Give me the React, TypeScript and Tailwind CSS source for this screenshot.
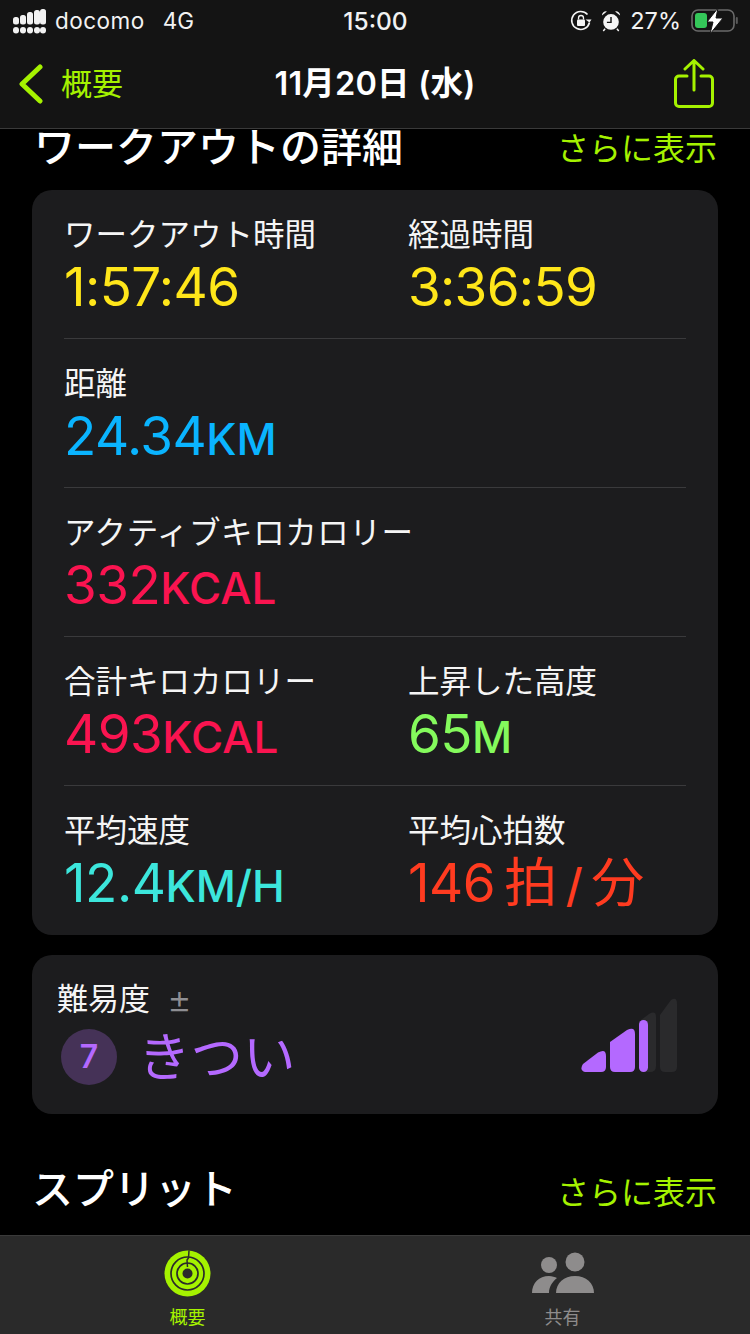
const font = { fontFamily: '"Inter","Noto Sans CJK JP",sans-serif' };

function Signal() {
  return (
    <svg width="33" height="25" viewBox="0 0 33 25" fill="#f2f2f2">
      {[0, 7, 14, 21, 27].map((x, i) => (
        <g key={x}>
          <rect x={x} y={18} width="6" height="6.5" rx="3" />
          <rect x={x} y={[8, 6, 3, 1, 0][i]} width="6" height={[7.5, 9.5, 12.5, 14.5, 15.5][i]} rx="2.5" />
        </g>
      ))}
    </svg>
  );
}

function Battery() {
  return (
    <svg width="47" height="26" viewBox="0 0 47 26">
      <rect x="1" y="2" width="42" height="21" rx="6" fill="none" stroke="#6a6a6a" strokeWidth="1.6" />
      <rect x="4" y="5" width="12" height="15" rx="3" fill="#34c759" />
      <rect x="44.8" y="9" width="2" height="7" rx="1" fill="#5a5a5a" />
      <path d="M27 0 L16 14 H22 L19 26 L32 10 H25 Z" fill="#fff" stroke="#141414" strokeWidth="1" />
    </svg>
  );
}

function LockIcon() {
  return (
    <svg width="22" height="22" viewBox="0 0 22 22" fill="none" className="mr-[9px]">
      <path d="M19.5 12.5 A9 9 0 1 1 17.5 4.5" stroke="#f5f5f5" strokeWidth="1.6" />
      <path d="M15.5 9.5 H21.5 L19.5 12.5 Z" fill="#f5f5f5" />
      <rect x="7" y="9.5" width="8" height="6.5" rx="1" fill="#f5f5f5" />
      <path d="M8.5 9.5 V8 A2.5 2.5 0 0 1 13.5 8 V9.5" stroke="#f5f5f5" strokeWidth="1.3" />
    </svg>
  );
}

function AlarmIcon() {
  return (
    <svg width="20" height="24" viewBox="0 0 22 24" fill="none" className="mr-[9px]">
      <circle cx="11" cy="13" r="8.6" fill="#f5f5f5" />
      <path d="M11 7.5 V13.5 H6.5" stroke="#141414" strokeWidth="1.6" />
      <path d="M1 6 A4.5 4.5 0 0 1 6.5 1.5 Z M21 6 A4.5 4.5 0 0 0 15.5 1.5 Z" fill="#f5f5f5" />
      <path d="M4.5 20.5 L2.5 23 M17.5 20.5 L19.5 23" stroke="#f5f5f5" strokeWidth="1.6" />
    </svg>
  );
}

function Metric({ label, value, unit, color, tracking, labelClass }: { label: string; value: React.ReactNode; unit?: string; color: string; tracking?: string; labelClass?: string }) {
  return (
    <div className="flex flex-col">
      <div className={`text-[31.5px] leading-[38px] text-[#f5f5f5] whitespace-nowrap ${labelClass ?? ""}`}>{label}</div>
      <div className={`mt-[2px] text-[53px] leading-[62px] whitespace-nowrap ${tracking ?? "tracking-[-0.5px]"} ${color}`}>
        {value}
        {unit && <span className="text-[44px] font-medium tracking-[0px]">{unit}</span>}
      </div>
    </div>
  );
}

function Row({ children, last }: { children: React.ReactNode; last?: boolean }) {
  return (
    <div className={`grid grid-cols-[344px_1fr] h-[149px] pt-[26px] ${last ? "" : "border-b border-[#3a3a3c]"}`}>
      {children}
    </div>
  );
}

function SectionHead({ title, className, linkClass, titleClass }: { title: string; className: string; linkClass?: string; titleClass?: string }) {
  return (
    <div className={`flex items-center justify-between pr-[33px] ${className}`}>
      <span className={`text-[41px] leading-[48px] font-medium text-white ${titleClass ?? ""}`}>{title}</span>
      <span className={`text-[32px] leading-[40px] text-[#a5f200] ${linkClass ?? ""}`}>さらに表示</span>
    </div>
  );
}

export default function App() {
  return (
    <div style={font} className="w-[750px] h-[1334px] bg-black flex flex-col overflow-hidden text-white">
      <header className="relative z-10 h-[129px] shrink-0 bg-[#141414] border-b border-[#3a3a3a] flex flex-col">
        <div className="h-[42px] flex items-center justify-between pl-[13px] pr-[12px] text-[#f2f2f2]">
          <div className="flex items-center w-[250px]">
            <Signal />
            <span className="ml-[9px] text-[22.5px] tracking-[0.5px]">docomo</span>
            <span className="ml-[18px] text-[22.5px]">4G</span>
          </div>
          <span className="text-[24.5px] font-medium">15:00</span>
          <div className="flex items-center justify-end w-[250px]">
            <LockIcon />
            <AlarmIcon />
            <span className="text-[23.5px] mr-[10px]">27%</span>
            <Battery />
          </div>
        </div>
        <div className="flex-1 flex items-center justify-between pl-[18px] pr-[36px] pb-[2px]">
          <div className="flex items-center w-[200px]">
            <svg width="26" height="40" viewBox="0 0 26 40" fill="none">
              <path d="M22 3 L4 20 L22 37" stroke="#a5f200" strokeWidth="5" strokeLinecap="round" strokeLinejoin="round" />
            </svg>
            <span className="ml-[17px] text-[31px] leading-[40px] text-[#a5f200]">概要</span>
          </div>
          <span className="text-[32.5px] font-semibold leading-[40px] text-white tracking-[0.2px]">11月20日 (水)</span>
          <div className="w-[182px] flex justify-end">
            <svg width="40" height="50" viewBox="0 0 40 50" fill="none" stroke="#a5f200" strokeWidth="3" strokeLinecap="round" strokeLinejoin="round">
              <path d="M13 17 H5 A3.5 3.5 0 0 0 1.5 20.5 V44 A3.5 3.5 0 0 0 5 47.5 H35 A3.5 3.5 0 0 0 38.5 44 V20.5 A3.5 3.5 0 0 0 35 17 H27" />
              <path d="M20 31 V2 M11 10 L20 1.5 L29 10" />
            </svg>
          </div>
        </div>
      </header>

      <main className="flex-1 min-h-0 overflow-hidden flex flex-col">
        <SectionHead title="ワークアウトの詳細" titleClass="ml-[34px] -mt-[5px]" className="-mt-[4px] h-[48px]" />
        <section className="mt-[17px] mx-[32px] h-[745px] rounded-[20px] bg-[#1c1c1e] px-[32px]">
          <Row>
            <Metric label="ワークアウト時間" value="1:57:46" color="text-[#ffe61a]" tracking="tracking-[-0.6px]" />
            <Metric label="経過時間" value="3:36:59" color="text-[#ffe61a]" tracking="tracking-[-0.7px]" />
          </Row>
          <Row>
            <Metric label="距離" value="24.34" unit="KM" color="text-[#0ab4ff]" />
          </Row>
          <Row>
            <Metric label="アクティブキロカロリー" labelClass="tracking-[0.6px]" value="332" unit="KCAL" color="text-[#fa1450]" />
          </Row>
          <Row>
            <Metric label="合計キロカロリー" value="493" unit="KCAL" color="text-[#fa1450]" />
            <Metric label="上昇した高度" value="65" unit="M" color="text-[#84fa5c]" />
          </Row>
          <Row last>
            <Metric label="平均速度" value="12.4" unit="KM/H" color="text-[#3ce6dc]" />
            <Metric
              label="平均心拍数"
              value={
                <>
                  146
                  <span className="ml-[9px]">拍</span>
                  <span className="ml-[9px] text-[46px] font-medium">/</span>
                  <span className="ml-[9px]">分</span>
                </>
              }
              color="text-[#ff3b20]"
            />
          </Row>
        </section>

        <section className="mt-[20px] mx-[32px] h-[159px] rounded-[20px] bg-[#1c1c1e] pl-[25px] pr-[40px] pt-[25px] flex items-start justify-between">
          <div className="flex flex-col">
            <div className="flex items-center h-[38px]">
              <span className="text-[31px] leading-[38px] text-[#f5f5f5]">難易度</span>
              <span className="ml-[17px] text-[38px] leading-[30px] font-light text-[#8e8e93]">±</span>
            </div>
            <div className="flex items-center mt-[8px] pl-[4px]">
              <div className="w-[56px] h-[56px] rounded-full bg-[#453257] flex items-center justify-center text-[32px] font-semibold text-[#b469ff]">7</div>
              <span className="ml-[21px] text-[52.5px] leading-[62px] text-[#b469ff]">きつい</span>
            </div>
          </div>
          <svg width="97" height="75" viewBox="0 0 97 75" className="mt-[18px]">
            <path d="M60 22 L68 16 Q75 12 75 19 V68 Q75 74 69 74 H62 Z" fill="#2a2a2c" />
            <path d="M79 17 L90 2 Q96 -2 96 6 V69 Q96 74 91 74 H84 Q79 74 79 69 Z" fill="#2a2a2c" />
            <path d="M2 66 L17 54.5 Q25 50 25 58 V69 Q25 74 20 74 H4 Q-2 72 2 66 Z" fill="#b469ff" />
            <path d="M29 44 L46 32 Q54 28 54 36 V69 Q54 74 49 74 H34 Q29 74 29 69 Z" fill="#b469ff" />
            <rect x="58" y="22" width="9" height="52" rx="4.5" fill="#b469ff" />
          </svg>
        </section>

        <SectionHead title="スプリット" titleClass="ml-[32px] -mt-[3px]" className="mt-[52px] h-[48px]" linkClass="mt-[6px]" />
      </main>

      <nav className="h-[99px] shrink-0 bg-[#2a2a2a] border-t border-[#3a3a3a] grid grid-cols-2">
        <div className="flex flex-col items-center pt-[14px]">
          <svg width="47" height="47" viewBox="0 0 47 47">
            <circle cx="23.5" cy="23.5" r="23" fill="#a5f200" />
            <circle cx="23.5" cy="23.5" r="16.5" fill="none" stroke="#2a2a2a" strokeWidth="1.7" />
            <circle cx="23.5" cy="23.5" r="10.5" fill="none" stroke="#2a2a2a" strokeWidth="1.7" />
            <circle cx="23.5" cy="23.5" r="5" fill="#2a2a2a" />
            <path d="M25 0.5 L24.5 8 L23 10 L23.5 17" fill="none" stroke="#2a2a2a" strokeWidth="1.5" />
          </svg>
          <span className="mt-[9px] text-[18px] leading-[24px] text-[#a5f200]">概要</span>
        </div>
        <div className="flex flex-col items-center pt-[16px]">
          <svg width="62" height="42" viewBox="0 0 62 42" fill="#8e8c8c">
            <circle cx="17" cy="13" r="8" />
            <path d="M0 41 C0 31 7 24 17 24 C20 24 23 25 25 26 C20 30 17 35 17 41 Z" />
            <circle cx="43" cy="10" r="9.5" />
            <path d="M24 41 C24 31 32 24 43 24 C54 24 62 31 62 41 Z" />
          </svg>
          <span className="mt-[12px] text-[18px] leading-[24px] text-[#8e8c8c]">共有</span>
        </div>
      </nav>
    </div>
  );
}
